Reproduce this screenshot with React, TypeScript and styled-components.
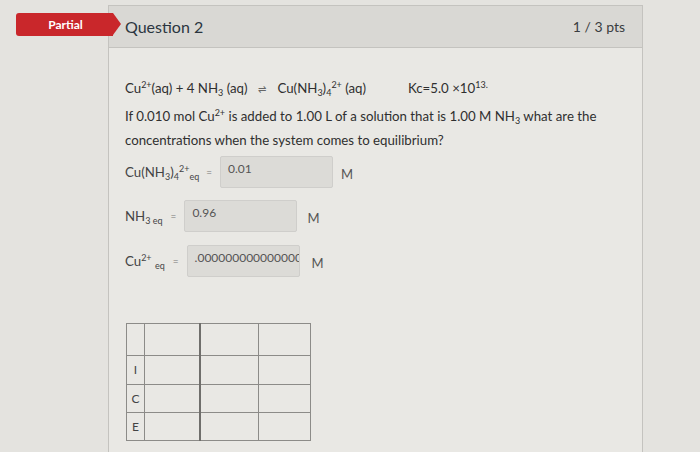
import React from 'react'
import styled, { createGlobalStyle } from 'styled-components'

const GlobalStyle = createGlobalStyle`
  html, body {
    margin: 0;
    padding: 0;
    background: #e4e3df;
    font-family: Lato, 'Open Sans', 'Liberation Sans', sans-serif;
    color: #2f2f2f;
  }
  sup, sub {
    font-size: 9px;
    line-height: 0;
  }
  sub {
    vertical-align: -3px;
  }
`

const Page = styled.div`
  display: flex;
  width: 700px;
  height: 452px;
  padding: 5px 0 0 108px;
  box-sizing: border-box;
  overflow: hidden;
`

const Card = styled.section`
  position: relative;
  width: 535px;
  border: 1px solid #c4c3bf;
  border-bottom: none;
  background: #e9e8e4;
  box-sizing: border-box;
`

const Badge = styled.div`
  position: absolute;
  left: -93px;
  top: 7px;
  width: 97px;
  height: 23px;
  background: #c9272b;
  border-radius: 3px 0 0 3px;
  color: #fff;
  font-size: 12px;
  font-weight: 700;
  display: flex;
  align-items: center;
  justify-content: center;
  padding-left: 2px;
  box-sizing: border-box;
  &::after {
    content: '';
    position: absolute;
    right: -8px;
    top: 0;
    border-top: 11.5px solid transparent;
    border-bottom: 11.5px solid transparent;
    border-left: 8px solid #c9272b;
  }
`

const Header = styled.header`
  height: 41px;
  display: flex;
  align-items: center;
  justify-content: space-between;
  padding: 0 17px 0 16px;
  background: #d9d8d4;
  border-bottom: 1px solid #c4c3bf;
`

const Title = styled.h2`
  margin: 0;
  font-size: 16px;
  font-weight: 400;
  color: #2b3640;
`

const Points = styled.span`
  font-size: 14px;
  color: #3a3d40;
`

const Body = styled.div`
  padding: 28px 16px 0 16px;
  font-size: 13.25px;
  line-height: 24px;
`

const Para = styled.p`
  margin: 0 0 3px 0;
`

const Kc = styled.span`
  margin-left: 42px;
`

const Arrow = styled.span`
  font-size: 10px;
  color: #666;
  margin: 0 11px;
`

const AnswerRow = styled.div<{ $gap: number }>`
  display: flex;
  align-items: center;
  height: 32px;
  margin-top: ${(p) => p.$gap}px;
`

const Label = styled.span`
  font-size: 13.25px;
  color: #444;
`

const Equals = styled.span<{ $left: number }>`
  font-size: 10px;
  color: #777;
  margin: 0 8px 0 ${(p) => p.$left}px;
`

const Field = styled.div<{ $w: number }>`
  width: ${(p) => p.$w}px;
  height: 32px;
  box-sizing: border-box;
  background: #dcdbd7;
  border: 1px solid #cfcecb;
  border-radius: 2px;
  padding: 0 0 6px 7px;
  font-size: 12px;
  color: #555;
  display: flex;
  align-items: center;
  overflow: hidden;
  white-space: nowrap;
`

const Unit = styled.span<{ $left: number }>`
  margin-left: ${(p) => p.$left}px;
  font-size: 13px;
  color: #555;
  padding-top: 4px;
`

const IceTable = styled.table`
  margin: 46px 0 0 1px;
  border-collapse: collapse;
  border: 1px solid #8c8b88;
  td {
    border: 1px solid #8c8b88;
    padding: 0;
    font-size: 12px;
    color: #444;
    text-align: center;
  }
`

const Cell = styled.td<{ $w?: number; $h?: number; $strong?: boolean }>`
  width: ${(p) => (p.$w ? `${p.$w}px` : 'auto')};
  height: ${(p) => (p.$h ? `${p.$h}px` : 'auto')};
  ${(p) => (p.$strong ? 'border-right: 2px solid #6f6e6b !important;' : '')}
`

const rows = [
  { label: '', h: 31 },
  { label: 'I', h: 28 },
  { label: 'C', h: 27 },
  { label: 'E', h: 27 },
]

export default function App() {
  return (
    <>
      <GlobalStyle />
      <Page>
        <Card>
          <Badge>Partial</Badge>
          <Header>
            <Title>Question 2</Title>
            <Points>1 / 3 pts</Points>
          </Header>
          <Body>
            <Para>
              Cu<sup>2+</sup>(aq) + 4 NH<sub>3</sub> (aq)
              <Arrow>⇌</Arrow>
              Cu(NH<sub>3</sub>)<sub>4</sub>
              <sup>2+</sup> (aq)
              <Kc>
                Kc=5.0 ×10<sup>13.</sup>
              </Kc>
            </Para>
            <Para>
              If 0.010 mol Cu<sup>2+</sup> is added to 1.00 L of a solution that is 1.00 M NH
              <sub>3</sub> what are the concentrations when the system comes to equilibrium?
            </Para>
            <AnswerRow $gap={4}>
              <Label>
                Cu(NH<sub>3</sub>)<sub>4</sub>
                <sup>2+</sup>
                <sub>eq</sub>
              </Label>
              <Equals $left={7}>=</Equals>
              <Field $w={113}>0.01</Field>
              <Unit $left={8}>M</Unit>
            </AnswerRow>
            <AnswerRow $gap={12}>
              <Label>
                NH<sub>3 eq</sub>
              </Label>
              <Equals $left={8}>=</Equals>
              <Field $w={113}>0.96</Field>
              <Unit $left={10}>M</Unit>
            </AnswerRow>
            <AnswerRow $gap={13}>
              <Label>
                Cu<sup>2+</sup> <sub>eq</sub>
              </Label>
              <Equals $left={8}>=</Equals>
              <Field $w={113}>.0000000000000000</Field>
              <Unit $left={12}>M</Unit>
            </AnswerRow>
            <IceTable>
              <tbody>
                {rows.map((r, i) => (
                  <tr key={i}>
                    <Cell $w={17} $h={r.h}>
                      {r.label}
                    </Cell>
                    <Cell $w={54} $strong>
                      {' '}
                    </Cell>
                    <Cell $w={57}> </Cell>
                    <Cell $w={51}> </Cell>
                  </tr>
                ))}
              </tbody>
            </IceTable>
          </Body>
        </Card>
      </Page>
    </>
  )
}
